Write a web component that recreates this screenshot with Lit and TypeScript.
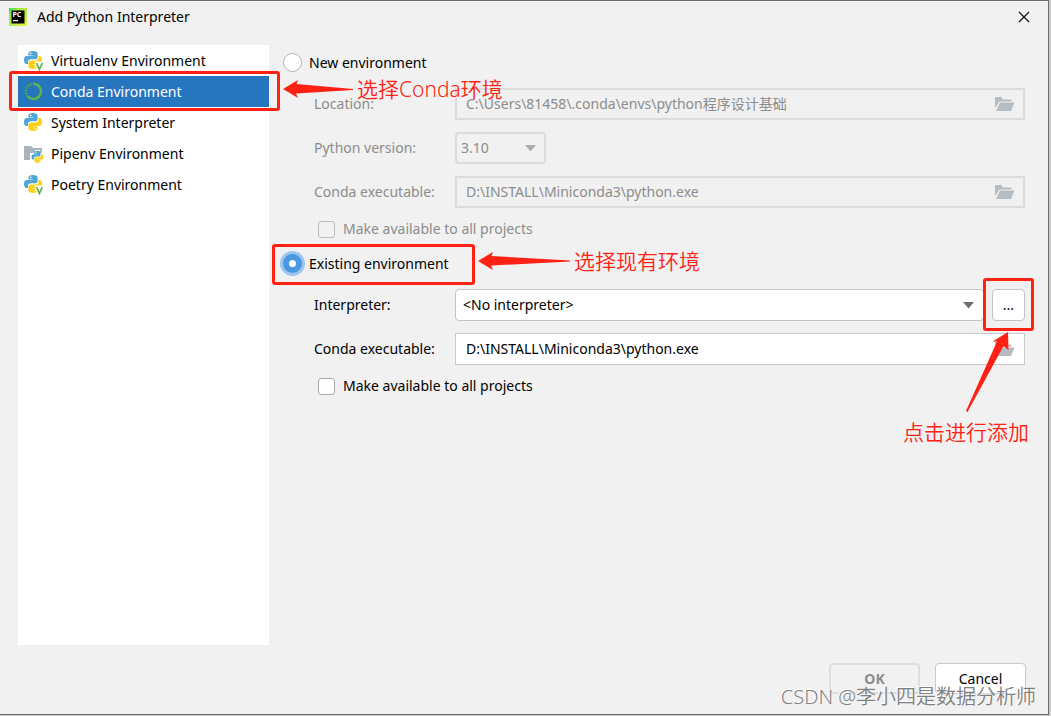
import { LitElement, html, svg, css, nothing } from "lit";
import { customElement, property, state } from "lit/decorators.js";
import { classMap } from "lit/directives/class-map.js";

type IconName = "python-v" | "conda" | "python" | "pipenv";

interface EnvironmentKind {
  label: string;
  icon: IconName;
}

const KINDS: EnvironmentKind[] = [
  { label: "Virtualenv Environment", icon: "python-v" },
  { label: "Conda Environment", icon: "conda" },
  { label: "System Interpreter", icon: "python" },
  { label: "Pipenv Environment", icon: "pipenv" },
  { label: "Poetry Environment", icon: "python-v" },
];

// Two interlocking snakes on an 18 x 18 grid.
const snakes = svg`
  <path fill="#4ea6d6" d="M9 0C6 0 4.400 1 4.400 2.800V4.400H9.200V5H2.800C1 5 0 6.600 0 9S1 13 2.600 13H4V11.100C4 9.300 5.300 8.300 6.900 8.300H11.200C12.600 8.300 13.600 7.400 13.600 6V2.800C13.600 1 11.800 0 9 0ZM6.700 1.600A.8.8 0 1 1 6.700 3.200A.8.8 0 0 1 6.700 1.600Z"/>
  <path fill="#ffcf1b" d="M9 18C12 18 13.600 17 13.600 15.200V13.600H8.800V13H15.200C17 13 18 11.400 18 9S17 5 15.400 5H14.400V7C14.400 8.600 13 9.500 11.300 9.500H7C5.400 9.500 4.400 10.400 4.400 11.900V15.200C4.400 17 6.200 18 9 18ZM11.300 16.400A.8.8 0 1 1 11.300 14.800A.8.8 0 0 1 11.300 16.400Z"/>`;

@customElement("env-icon")
export class EnvIcon extends LitElement {
  @property() name: IconName = "python";

  static styles = css`
    :host {
      display: block;
      width: 20px;
      height: 20px;
    }
    .icon {
      display: block;
      overflow: visible;
    }
  `;

  private shape() {
    switch (this.name) {
      case "python":
        return svg`<g>${snakes}</g>`;
      case "python-v":
        return svg`<g>${snakes}</g>
          <path d="M10.500 10.500H20V19H13.500Z" fill="#fff"/>
          <path d="M12.500 12 15.400 18.400 18.300 12" fill="none" stroke="#5fb04b" stroke-width="1.700"/>`;
      case "pipenv":
        return svg`<path d="M0 2H7L9 4H18V16H0Z" fill="#aab4bb"/>
          <path d="M11 6H16V9H20V16H17V19H9V16H6V9H11Z" fill="#fff"/>
          <g transform="translate(7.500 7) scale(.66)">${snakes}</g>`;
      case "conda":
        return svg`<path d="M9 1.800A7.600 7.600 0 1 1 3.800 14.500" fill="none" stroke="#5cb544" stroke-width="2.400"/>
          <path d="M3.800 14.500A7.600 7.600 0 0 1 9 1.800" fill="none" stroke="#4fae50" stroke-width="2.600" stroke-dasharray="1.500 1.300"/>`;
    }
  }

  render() {
    return html`<svg class="icon" width="20" height="20" viewBox="0 0 20 20" aria-hidden="true">${this.shape()}</svg>`;
  }
}

@customElement("app-root")
export class AppRoot extends LitElement {
  @state() private selected = 1;
  @state() private mode: "new" | "existing" = "existing";

  static styles = css`
    :host {
      display: block;
      box-sizing: border-box;
      min-height: 100vh;
      padding: 0 2px 1px 0;
      background: #cacaca;
      color: #000;
      font: 14px/20px "Noto Sans", "Noto Sans CJK SC", sans-serif;
    }
    *,
    *::before {
      box-sizing: border-box;
    }
    button,
    input,
    select {
      margin: 0;
      font: inherit;
      color: inherit;
    }
    .dialog {
      position: relative;
      display: flex;
      flex-direction: column;
      min-height: calc(100vh - 1px);
      background: #f1f1f1;
      border: solid #6c6a6c;
      border-width: 1px 1px 1px 0;
    }
    .titlebar {
      display: flex;
      align-items: center;
      gap: 10px;
      height: 32px;
      padding: 0 16px 0 9px;
    }
    .title {
      flex: 1;
      margin: 0;
      font-size: 14px;
      font-weight: 400;
    }
    .close {
      display: flex;
      padding: 2px;
      border: 0;
      background: none;
    }
    .body {
      flex: 1;
      display: flex;
      gap: 14px;
      padding: 12px 23px 0 18px;
    }
    .kinds {
      flex: none;
      width: 251px;
      margin: 0;
      padding: 0;
      list-style: none;
      background: #fff;
    }
    .kind {
      position: relative;
    }
    .pick {
      display: flex;
      align-items: center;
      gap: 7px;
      width: 100%;
      height: 31px;
      padding: 0 6px;
      border: 0;
      background: none;
      text-align: left;
    }
    .pick.on {
      background: #2675bf;
      color: #fff;
    }
    .settings {
      flex: 1;
      min-width: 0;
    }
    .mode {
      position: relative;
      display: flex;
      align-items: center;
      height: 35px;
    }
    .mode label {
      display: flex;
      align-items: center;
      gap: 7px;
    }
    .radio {
      appearance: none;
      width: 19px;
      height: 19px;
      border: 1px solid #b4b4b4;
      border-radius: 50%;
      background: #fff;
    }
    .radio:checked {
      border: 6px solid #4a98e2;
      box-shadow: 0 0 0 3px #9cc5f1;
    }
    .form {
      display: grid;
      grid-template-columns: 129px minmax(0, 1fr);
      column-gap: 12px;
      row-gap: 12px;
      align-items: center;
      padding: 8px 0 8px 31px;
    }
    .form.off {
      color: #8c8c8c;
    }
    .field {
      position: relative;
      display: flex;
      align-items: center;
      height: 32px;
      padding: 0 9px 0 10px;
      border: 1px solid #c8c8c8;
      background: #fff;
    }
    .off .field {
      border: 2px solid #dcdcdc;
      padding: 0 8px 0 9px;
      background: none;
    }
    .text {
      flex: 1;
      min-width: 0;
      padding: 0;
      border: 0;
      outline: 0;
      background: none;
    }
    .browse {
      display: flex;
      padding: 0;
      border: 0;
      background: none;
    }
    .pair {
      display: flex;
      gap: 8px;
    }
    .combo {
      position: relative;
      flex: 1;
    }
    .combo.small {
      flex: none;
      width: 91px;
    }
    .select {
      display: block;
      appearance: none;
      width: 100%;
      height: 32px;
      padding: 0 7px;
      border: 1px solid #c4c4c4;
      border-radius: 4px;
      background: #fff;
      opacity: 1;
    }
    .off .select {
      border: 2px solid #dcdcdc;
      padding: 0 4px;
      background: none;
    }
    .caret {
      position: absolute;
      right: 10px;
      top: 13px;
      color: #6e6e6e;
      pointer-events: none;
    }
    .off .caret {
      color: #acacac;
    }
    .more {
      position: relative;
      width: 33px;
    }
    .dots {
      width: 100%;
      height: 32px;
      padding: 0;
      border: 1px solid #c4c4c4;
      border-radius: 4px;
      background: #fff;
    }
    .share {
      grid-column: 1 / -1;
      display: flex;
      align-items: center;
      gap: 8px;
      height: 18px;
      padding-left: 4px;
    }
    .check {
      appearance: none;
      width: 17px;
      height: 17px;
      border: 1px solid #aaa;
      border-radius: 3px;
      background: #fff;
    }
    .off .check {
      border-color: #bcbcbc;
      background: none;
    }
    .footer {
      display: flex;
      justify-content: flex-end;
      gap: 15px;
      padding: 18px 22px 20px;
    }
    .action {
      width: 91px;
      height: 31px;
      padding: 0;
      border: 1px solid #c8c8c8;
      border-radius: 4px;
      background: #fff;
    }
    .action:disabled {
      border: 2px solid #dedede;
      background: none;
      color: #8c8c8c;
      font-weight: 700;
    }
    .frame {
      position: absolute;
      z-index: 1;
      border: 3px solid #ff2113;
      border-radius: 3px;
      pointer-events: none;
    }
    .frame.conda {
      inset: -5px -11px -4px -9px;
    }
    .frame.existing {
      left: -11px;
      top: -2px;
      width: 203px;
      height: 41px;
    }
    .frame.dots-frame {
      inset: -11px -9px -10px;
    }
    .note {
      position: absolute;
      z-index: 2;
      display: flex;
      align-items: center;
      gap: 4px;
      color: #ff2113;
      font-size: 21px;
      font-weight: 350;
      line-height: 28px;
      white-space: nowrap;
      pointer-events: none;
    }
    .note svg {
      display: block;
      fill: #ff2113;
    }
    .note.conda {
      left: calc(100% + 14px);
      top: -1px;
    }
    .note.existing {
      left: 195px;
      top: 1px;
    }
    .note.add {
      right: -4px;
      top: calc(100% + 11px);
      flex-direction: column;
      align-items: flex-end;
      gap: 6px;
    }
    .note.add svg {
      margin-right: 20px;
    }
    .watermark {
      position: absolute;
      z-index: 3;
      right: 12px;
      bottom: 4px;
      color: #808080;
      font-size: 20px;
      font-weight: 350;
      line-height: 26px;
      text-shadow: -1px -1px 0 #fff;
      white-space: nowrap;
      pointer-events: none;
    }
  `;

  private folder() {
    return html`<svg width="20" height="16" viewBox="0 0 20 16" aria-hidden="true">
      <path fill="#b6bdc2" d="M0 1H6L8 3.500H16.500V5.500H4.500L0 12.500ZM5 6.500H19.500L16 15H1Z" />
    </svg>`;
  }

  private caret() {
    return html`<svg class="caret" width="11" height="7" viewBox="0 0 11 7" aria-hidden="true">
      <path fill="currentColor" d="M0 0H11L5.500 6.500Z" />
    </svg>`;
  }

  private pathRow(id: string, label: string, value: string, disabled: boolean) {
    return html`
      <label for=${id}>${label}</label>
      <div class="field">
        <input class="text" id=${id} type="text" .value=${value} ?disabled=${disabled} />
        <button class="browse" aria-label="Browse" ?disabled=${disabled}>${this.folder()}</button>
      </div>
    `;
  }

  private shareRow(disabled: boolean) {
    return html`<label class="share">
      <input class="check" type="checkbox" ?disabled=${disabled} />Make available to all projects
    </label>`;
  }

  private modeRadio(mode: "new" | "existing", label: string) {
    return html`<label>
      <input class="radio" type="radio" name="mode" .checked=${this.mode === mode}
        @change=${() => (this.mode = mode)} />${label}
    </label>`;
  }

  render() {
    const newOff = this.mode !== "new";
    const existingOff = !newOff;
    return html`
      <main class="dialog">
        <header class="titlebar">
          <svg width="18" height="18" viewBox="0 0 18 18" aria-hidden="true">
            <defs>
              <linearGradient id="pc" x1="0" y1="0" x2="1" y2="1">
                <stop offset="0" stop-color="#21e760" />
                <stop offset=".25" stop-color="#9be83a" />
                <stop offset="1" stop-color="#e4f44a" />
              </linearGradient>
            </defs>
            <rect width="18" height="18" fill="url(#pc)" />
            <rect x="2.500" y="2.500" width="13" height="13" fill="#000" />
            <text x="3.500" y="9" font-size="7" font-weight="700" fill="#fff">PC</text>
            <rect x="4" y="12" width="5" height="1.200" fill="#fff" />
          </svg>
          <h1 class="title">Add Python Interpreter</h1>
          <button class="close" aria-label="Close">
            <svg width="12" height="12" viewBox="0 0 12 12" aria-hidden="true">
              <path d="M1 1 11 11M11 1 1 11" fill="none" stroke="#111" stroke-width="1.200" />
            </svg>
          </button>
        </header>

        <div class="body">
          <ul class="kinds">
            ${KINDS.map(
              (kind, i) => html`<li class="kind">
                <button class=${classMap({ pick: true, on: i === this.selected })}
                  @click=${() => (this.selected = i)}>
                  <env-icon name=${kind.icon}></env-icon>${kind.label}
                </button>
                ${kind.icon === "conda"
                  ? html`<span class="frame conda"></span>
                      <span class="note conda">
                        <svg width="70" height="18" viewBox="0 0 70 18" aria-hidden="true">
                          <path d="M0 9 15 0 13.500 4 70 9V10L13 13.500 15 18Z" />
                        </svg>选择Conda环境</span>`
                  : nothing}
              </li>`
            )}
          </ul>

          <section class="settings">
            <div class="mode">${this.modeRadio("new", "New environment")}</div>
            <div class=${classMap({ form: true, off: newOff })}>
              ${this.pathRow("location", "Location:", "C:\\Users\\81458\\.conda\\envs\\python程序设计基础", newOff)}
              <label for="version">Python version:</label>
              <div class="combo small">
                <select class="select" id="version" ?disabled=${newOff}><option>3.10</option></select>
                ${this.caret()}
              </div>
              ${this.pathRow("conda-new", "Conda executable:", "D:\\INSTALL\\Miniconda3\\python.exe", newOff)}
              ${this.shareRow(newOff)}
            </div>

            <div class="mode">
              ${this.modeRadio("existing", "Existing environment")}
              <span class="frame existing"></span>
              <span class="note existing">
                <svg width="92" height="18" viewBox="0 0 92 18" aria-hidden="true">
                  <path d="M0 9 15 0 13.500 4 92 8.500V9.500L13 13.500 15 18Z" />
                </svg>选择现有环境</span>
            </div>
            <div class=${classMap({ form: true, off: existingOff })}>
              <label for="interpreter">Interpreter:</label>
              <div class="pair">
                <div class="combo">
                  <select class="select" id="interpreter" ?disabled=${existingOff}>
                    <option>&lt;No interpreter&gt;</option>
                  </select>
                  ${this.caret()}
                </div>
                <div class="more">
                  <button class="dots" ?disabled=${existingOff}>...</button>
                  <span class="frame dots-frame"></span>
                  <span class="note add">
                    <svg width="43" height="80" viewBox="0 0 43 80" aria-hidden="true">
                      <path d="M42 0 26.500 9.500 31 9.500 0 79 1.500 80 37.500 14 42.500 18Z" />
                    </svg>点击进行添加</span>
                </div>
              </div>
              ${this.pathRow("conda-existing", "Conda executable:", "D:\\INSTALL\\Miniconda3\\python.exe", existingOff)}
              ${this.shareRow(existingOff)}
            </div>
          </section>
        </div>

        <footer class="footer">
          <button class="action" disabled>OK</button>
          <button class="action">Cancel</button>
        </footer>
        <span class="watermark">CSDN @李小四是数据分析师</span>
      </main>
    `;
  }
}
